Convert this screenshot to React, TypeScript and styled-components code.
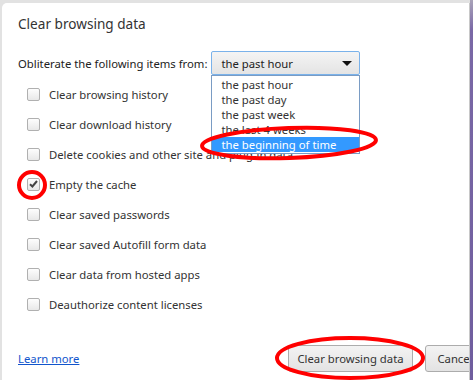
import React from "react";
import styled, { createGlobalStyle } from "styled-components";

const GlobalStyle = createGlobalStyle`
  html, body {
    margin: 0;
    padding: 0;
    background: #fff;
  }
  body {
    font-family: "Noto Sans", "Open Sans", "Liberation Sans", sans-serif;
    font-size: 11.3px;
    color: #222;
  }
`;

const Page = styled.div`
  position: relative;
  width: 473px;
  height: 380px;
  display: flex;
  background: #e2e2e2;
  overflow: hidden;
`;

const Dialog = styled.div`
  position: relative;
  flex: 1;
  margin: 3px 0 0 2px;
  background: #fff;
  border-top-left-radius: 5px;
  border-right: 1px solid #c8c8c8;
  display: flex;
  flex-direction: column;
  padding: 0 0 0 16px;
  overflow: hidden;
`;

const ScrollEdge = styled.div`
  width: 3px;
  background: linear-gradient(#a9a3b9, #7a68a6 30px, #6f5d9e);
`;

const Title = styled.h1`
  margin: 11px 0 0;
  font-size: 13.6px;
  font-weight: 400;
  color: #333;
  line-height: 20px;
`;

const FromRow = styled.div`
  margin-top: 17px;
  display: flex;
  align-items: center;
  gap: 4px;
  height: 24px;
`;

const SelectWrap = styled.div`
  position: relative;
`;

const Select = styled.div`
  width: 149px;
  height: 24px;
  box-sizing: border-box;
  border: 1px solid #7ab2ea;
  border-radius: 2px;
  background: linear-gradient(#f4f4f4, #e4e4e4);
  display: flex;
  align-items: center;
  justify-content: space-between;
  padding: 0 7px 0 9px;
`;

const Caret = styled.span`
  width: 0;
  height: 0;
  border-left: 5px solid transparent;
  border-right: 5px solid transparent;
  border-top: 5px solid #111;
`;

const Menu = styled.ul`
  position: absolute;
  top: 24px;
  left: 0;
  width: 149px;
  box-sizing: border-box;
  margin: 0;
  padding: 1px 0;
  list-style: none;
  background: #fff;
  border: 1px solid #7a9cc4;
  z-index: 2;
`;

const MenuItem = styled.li<{ $active?: boolean }>`
  height: 15px;
  line-height: 15px;
  padding-left: 9px;
  color: ${(p) => (p.$active ? "#fff" : "#333")};
  background: ${(p) => (p.$active ? "#3399ff" : "transparent")};
`;

const Options = styled.div`
  margin-top: 4px;
  display: flex;
  flex-direction: column;
`;

const Option = styled.label`
  height: 30px;
  display: flex;
  align-items: center;
  gap: 9px;
  padding-left: 9px;
  color: #333;
`;

const Box = styled.span`
  width: 13px;
  height: 13px;
  box-sizing: border-box;
  border: 1px solid #b0b0b0;
  border-radius: 2px;
  background: linear-gradient(#fdfdfd, #e8e8e8);
  display: flex;
  align-items: center;
  justify-content: center;
`;

const Footer = styled.div`
  margin-top: auto;
  margin-right: -16px;
  height: 43px;
  display: flex;
  align-items: center;
`;

const LearnMore = styled.a`
  color: #1155cc;
  text-decoration: underline;
  margin-right: auto;
`;

const Button = styled.button<{ $w: number }>`
  width: ${(p) => p.$w}px;
  height: 27px;
  box-sizing: border-box;
  border: 1px solid #acacac;
  border-radius: 3px;
  background: linear-gradient(#f3f3f3, #e3e3e3);
  font-family: inherit;
  font-size: 11.3px;
  color: #333;
  padding: 0;
  margin-left: 12px;
  white-space: nowrap;
  flex-shrink: 0;
`;

const Marks = styled.svg`
  position: absolute;
  left: 0;
  top: 0;
  pointer-events: none;
  z-index: 5;
`;

const items = [
  "Clear browsing history",
  "Clear download history",
  "Delete cookies and other site and plug-in data",
  "Empty the cache",
  "Clear saved passwords",
  "Clear saved Autofill form data",
  "Clear data from hosted apps",
  "Deauthorize content licenses",
];

const ranges = [
  "the past hour",
  "the past day",
  "the past week",
  "the last 4 weeks",
  "the beginning of time",
];

export default function App() {
  return (
    <>
      <GlobalStyle />
      <Page>
        <Dialog>
          <Title>Clear browsing data</Title>
          <FromRow>
            <span>Obliterate the following items from:</span>
            <SelectWrap>
              <Select>
                <span>the past hour</span>
                <Caret />
              </Select>
              <Menu>
                {ranges.map((r, i) => (
                  <MenuItem key={r} $active={i === ranges.length - 1}>
                    {r}
                  </MenuItem>
                ))}
              </Menu>
            </SelectWrap>
          </FromRow>
          <Options>
            {items.map((label) => (
              <Option key={label}>
                <Box>
                  {label === "Empty the cache" && (
                    <svg width="9" height="8" viewBox="0 0 9 8">
                      <path d="M1 4.2 L3.4 6.5 L8 1" fill="none" stroke="#444" strokeWidth="2" />
                    </svg>
                  )}
                </Box>
                <span>{label}</span>
              </Option>
            ))}
          </Options>
          <Footer>
            <LearnMore href="#">Learn more</LearnMore>
            <Button $w={125}>Clear browsing data</Button>
            <Button $w={60}>Cancel</Button>
          </Footer>
        </Dialog>
        <ScrollEdge />
        <Marks width="473" height="380" viewBox="0 0 473 380">
          <ellipse cx="289" cy="143" rx="87" ry="15" transform="rotate(-2 289 143)" fill="none" stroke="#ff0000" strokeWidth="4" />
          <circle cx="32" cy="185" r="13" fill="none" stroke="#ff0000" strokeWidth="4" />
          <ellipse cx="350" cy="358" rx="73" ry="20" fill="none" stroke="#ff0000" strokeWidth="4" />
        </Marks>
      </Page>
    </>
  );
}
